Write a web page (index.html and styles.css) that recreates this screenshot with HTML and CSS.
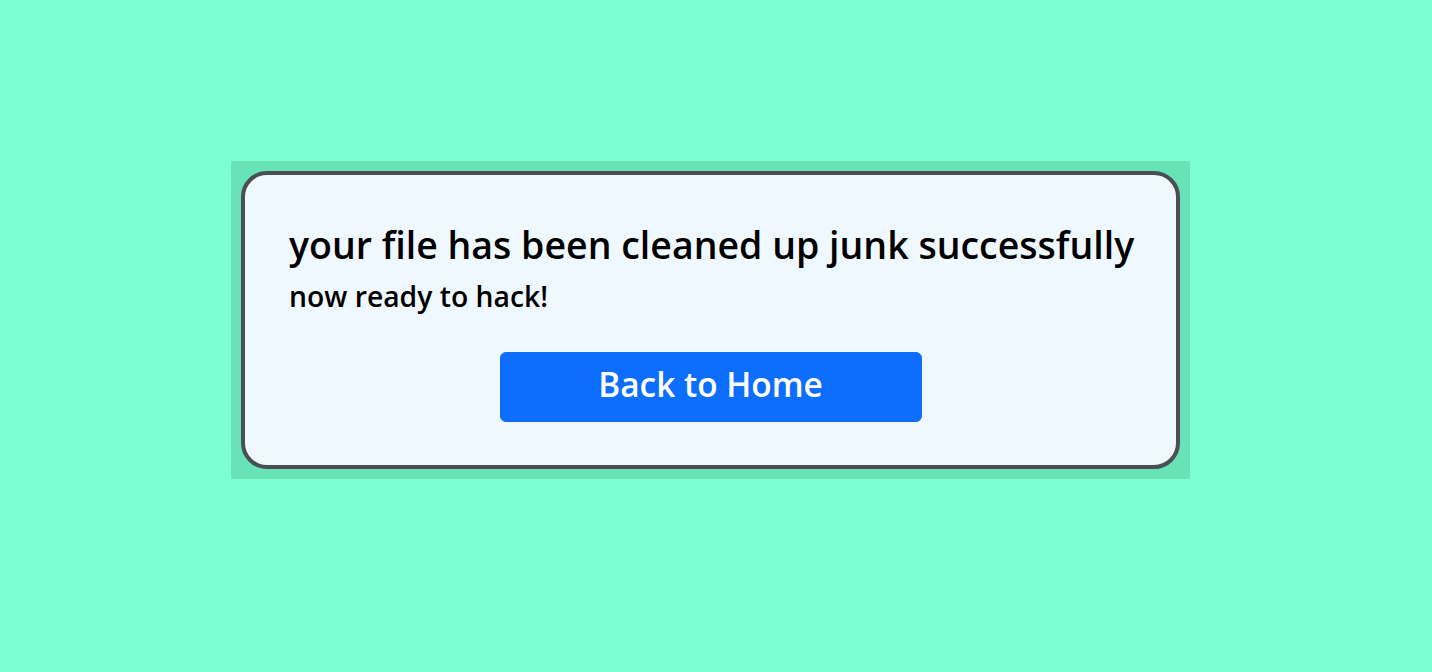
FILE: index.html
```html
<!DOCTYPE html>
<html lang="en">
<head>
<meta charset="utf-8">
<title>Cleaned</title>
<link rel="stylesheet" href="styles.css">
</head>
<body>
<main class="page">
  <section class="frame">
    <div class="card">
      <h1 class="title">your file has been cleaned up junk successfully</h1>
      <h3 class="subtitle">now ready to hack!</h3>
      <button class="home-btn" type="button">Back to Home</button>
    </div>
  </section>
</main>
</body>
</html>
```

FILE: styles.css
```css
html, body {
  margin: 0;
  padding: 0;
}
body {
  background: #7fffd4;
  font-family: "Open Sans", "Noto Sans", "Liberation Sans", sans-serif;
  color: #000;
  height: 672px;
}
.page {
  display: flex;
  padding: 161px 0 0 231px;
}
.frame {
  background: #68e2b7;
  padding: 10px;
}
.card {
  width: 843px;
  background: #f0f8ff;
  border: 4px solid #4b4f54;
  border-radius: 26px;
  padding: 46px 44px 43px 44px;
}
.title {
  margin: 0 0 9px;
  font-size: 37.5px;
  font-weight: 600;
  line-height: 48px;
  white-space: nowrap;
}
.subtitle {
  margin: 0;
  font-size: 28.3px;
  font-weight: 600;
  line-height: 36px;
  white-space: nowrap;
}
.home-btn {
  display: block;
  width: 422px;
  height: 70px;
  margin: 38px auto 0;
  background: #0d6efd;
  border: 1px solid #0d6efd;
  border-radius: 6px;
  color: #fff;
  font-family: inherit;
  font-size: 33.4px;
  font-weight: 600;
  padding: 0 0 7px;
  cursor: pointer;
}
```
